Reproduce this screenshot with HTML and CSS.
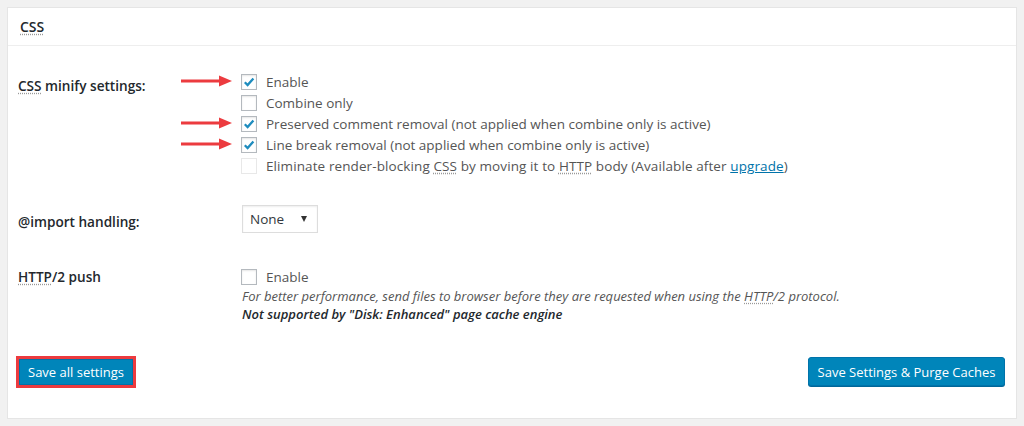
FILE: index.html
```html
<!DOCTYPE html>
<html>
<head>
<meta charset="utf-8">
<link rel="stylesheet" href="styles.css">
</head>
<body>
<div class="card">
  <div class="card-head"><h3 class="title"><abbr>CSS</abbr></h3></div>
  <div class="card-body">
    <div class="row">
      <div class="label label-offset"><abbr>CSS</abbr> minify settings:</div>
      <div class="field">
        <div class="opt">
          <span class="arrow"><svg width="52" height="12" viewBox="0 0 52 12"><line x1="0" y1="6" x2="40" y2="6" stroke="#ec3b3f" stroke-width="3"/><polygon points="38,0.5 51,6 38,11.5" fill="#ec3b3f"/></svg></span>
          <span class="cb"><svg width="14" height="14" viewBox="0 0 14 14"><path d="M2.8 7.2 L5.6 10 L11.4 3.4" fill="none" stroke="#1e8cbe" stroke-width="2.3"/></svg></span>
          <span>Enable</span>
        </div>
        <div class="opt">
          <span class="cb"></span>
          <span>Combine only</span>
        </div>
        <div class="opt">
          <span class="arrow"><svg width="52" height="12" viewBox="0 0 52 12"><line x1="0" y1="6" x2="40" y2="6" stroke="#ec3b3f" stroke-width="3"/><polygon points="38,0.5 51,6 38,11.5" fill="#ec3b3f"/></svg></span>
          <span class="cb"><svg width="14" height="14" viewBox="0 0 14 14"><path d="M2.8 7.2 L5.6 10 L11.4 3.4" fill="none" stroke="#1e8cbe" stroke-width="2.3"/></svg></span>
          <span>Preserved comment removal (not applied when combine only is active)</span>
        </div>
        <div class="opt">
          <span class="arrow"><svg width="52" height="12" viewBox="0 0 52 12"><line x1="0" y1="6" x2="40" y2="6" stroke="#ec3b3f" stroke-width="3"/><polygon points="38,0.5 51,6 38,11.5" fill="#ec3b3f"/></svg></span>
          <span class="cb"><svg width="14" height="14" viewBox="0 0 14 14"><path d="M2.8 7.2 L5.6 10 L11.4 3.4" fill="none" stroke="#1e8cbe" stroke-width="2.3"/></svg></span>
          <span>Line break removal (not applied when combine only is active)</span>
        </div>
        <div class="opt">
          <span class="cb cb-disabled"></span>
          <span class="wide">Eliminate render-blocking <abbr>CSS</abbr> by moving it to <abbr>HTTP</abbr> body (Available after <a class="link" href="#">upgrade</a>)</span>
        </div>
      </div>
    </div>
    <div class="row row-import">
      <div class="label label-import">@import handling:</div>
      <div class="field">
        <div class="select"><span>None</span><span class="caret"></span></div>
      </div>
    </div>
    <div class="row row-push">
      <div class="label"><abbr>HTTP</abbr>/2 push</div>
      <div class="field">
        <div class="opt">
          <span class="cb"></span>
          <span>Enable</span>
        </div>
        <div class="desc">For better performance, send files to browser before they are requested when using the <abbr>HTTP</abbr>/2 protocol.</div>
        <div class="desc desc-strong">Not supported by "Disk: Enhanced" page cache engine</div>
      </div>
    </div>
    <div class="actions">
      <button class="btn btn-marked">Save all settings</button>
      <button class="btn btn-round">Save Settings &amp; Purge Caches</button>
    </div>
  </div>
</div>
</body>
</html>
```
FILE: styles.css
```css
html, body {
  margin: 0;
  padding: 0;
  background: #f1f1f1;
}
body {
  padding: 7px;
  font-family: "Open Sans", "Noto Sans", sans-serif;
  font-size: 13.5px;
  color: #555;
}
.card {
  background: #fff;
  border: 1px solid #e5e5e5;
  height: 412px;
  box-sizing: border-box;
}
.card-head {
  height: 37px;
  border-bottom: 1px solid #eee;
  display: flex;
  align-items: center;
  padding: 0 12px;
}
.title {
  margin: 0;
  font-size: 14px;
  font-weight: 600;
  color: #23282d;
}
abbr {
  text-decoration: underline dotted #999;
  text-underline-offset: 2px;
}
.card-body {
  padding: 25px 10px 0 10px;
}
.row {
  display: grid;
  grid-template-columns: 223px 1fr;
}
.label {
  font-weight: 600;
  font-size: 13.6px;
  color: #23282d;
  line-height: 21px;
}
.label-offset {
  padding-top: 4px;
}
.label-import {
  padding-top: 6px;
}
.opt {
  position: relative;
  display: flex;
  align-items: center;
  height: 21px;
  gap: 9px;
  white-space: nowrap;
}
.arrow {
  position: absolute;
  left: -60px;
  top: 4px;
  display: flex;
}
.cb {
  width: 16px;
  height: 16px;
  box-sizing: border-box;
  border: 1px solid #b4b9be;
  box-shadow: inset 0 1px 2px rgba(0,0,0,.1);
  display: flex;
  align-items: center;
  justify-content: center;
  flex: none;
}
.cb-disabled {
  border-color: #e8e8e8;
  box-shadow: none;
}
.wide {
  letter-spacing: 0.1px;
}
.link {
  color: #0073aa;
  text-decoration: underline;
}
.row-import {
  margin-top: 29px;
}
.select {
  width: 76px;
  height: 28px;
  box-sizing: border-box;
  border: 1px solid #ddd;
  box-shadow: inset 0 1px 2px rgba(0,0,0,.07);
  display: flex;
  align-items: center;
  justify-content: space-between;
  padding: 0 10px 0 7px;
  color: #32373c;
  margin-left: 1px;
}
.caret {
  width: 0;
  height: 0;
  border-left: 3.5px solid transparent;
  border-right: 3.5px solid transparent;
  border-top: 6px solid #333;
}
.row-push {
  margin-top: 33px;
}
.desc {
  font-style: italic;
  font-size: 13px;
  line-height: 18px;
  color: #555;
  margin-left: 1px;
  white-space: nowrap;
}
.desc-strong {
  font-weight: 600;
  color: #23282d;
}
.actions {
  display: flex;
  justify-content: space-between;
  align-items: flex-start;
  margin-top: 34px;
  padding: 0 1px;
}
.btn {
  font-family: inherit;
  font-size: 13px;
  color: #fff;
  background: #0085ba;
  border: 1px solid #0073aa;
  box-shadow: 0 1px 0 #006799;
  height: 28px;
  padding: 0;
  white-space: nowrap;
  text-align: center;
  cursor: pointer;
}
.btn-marked {
  margin-top: 2px;
  outline: 3px solid #ec3b3f;
  border-radius: 0;
  width: 114px;
  height: 26px;
}
.btn-round {
  border-radius: 3px;
  height: 29px;
  width: 197px;
}
```
